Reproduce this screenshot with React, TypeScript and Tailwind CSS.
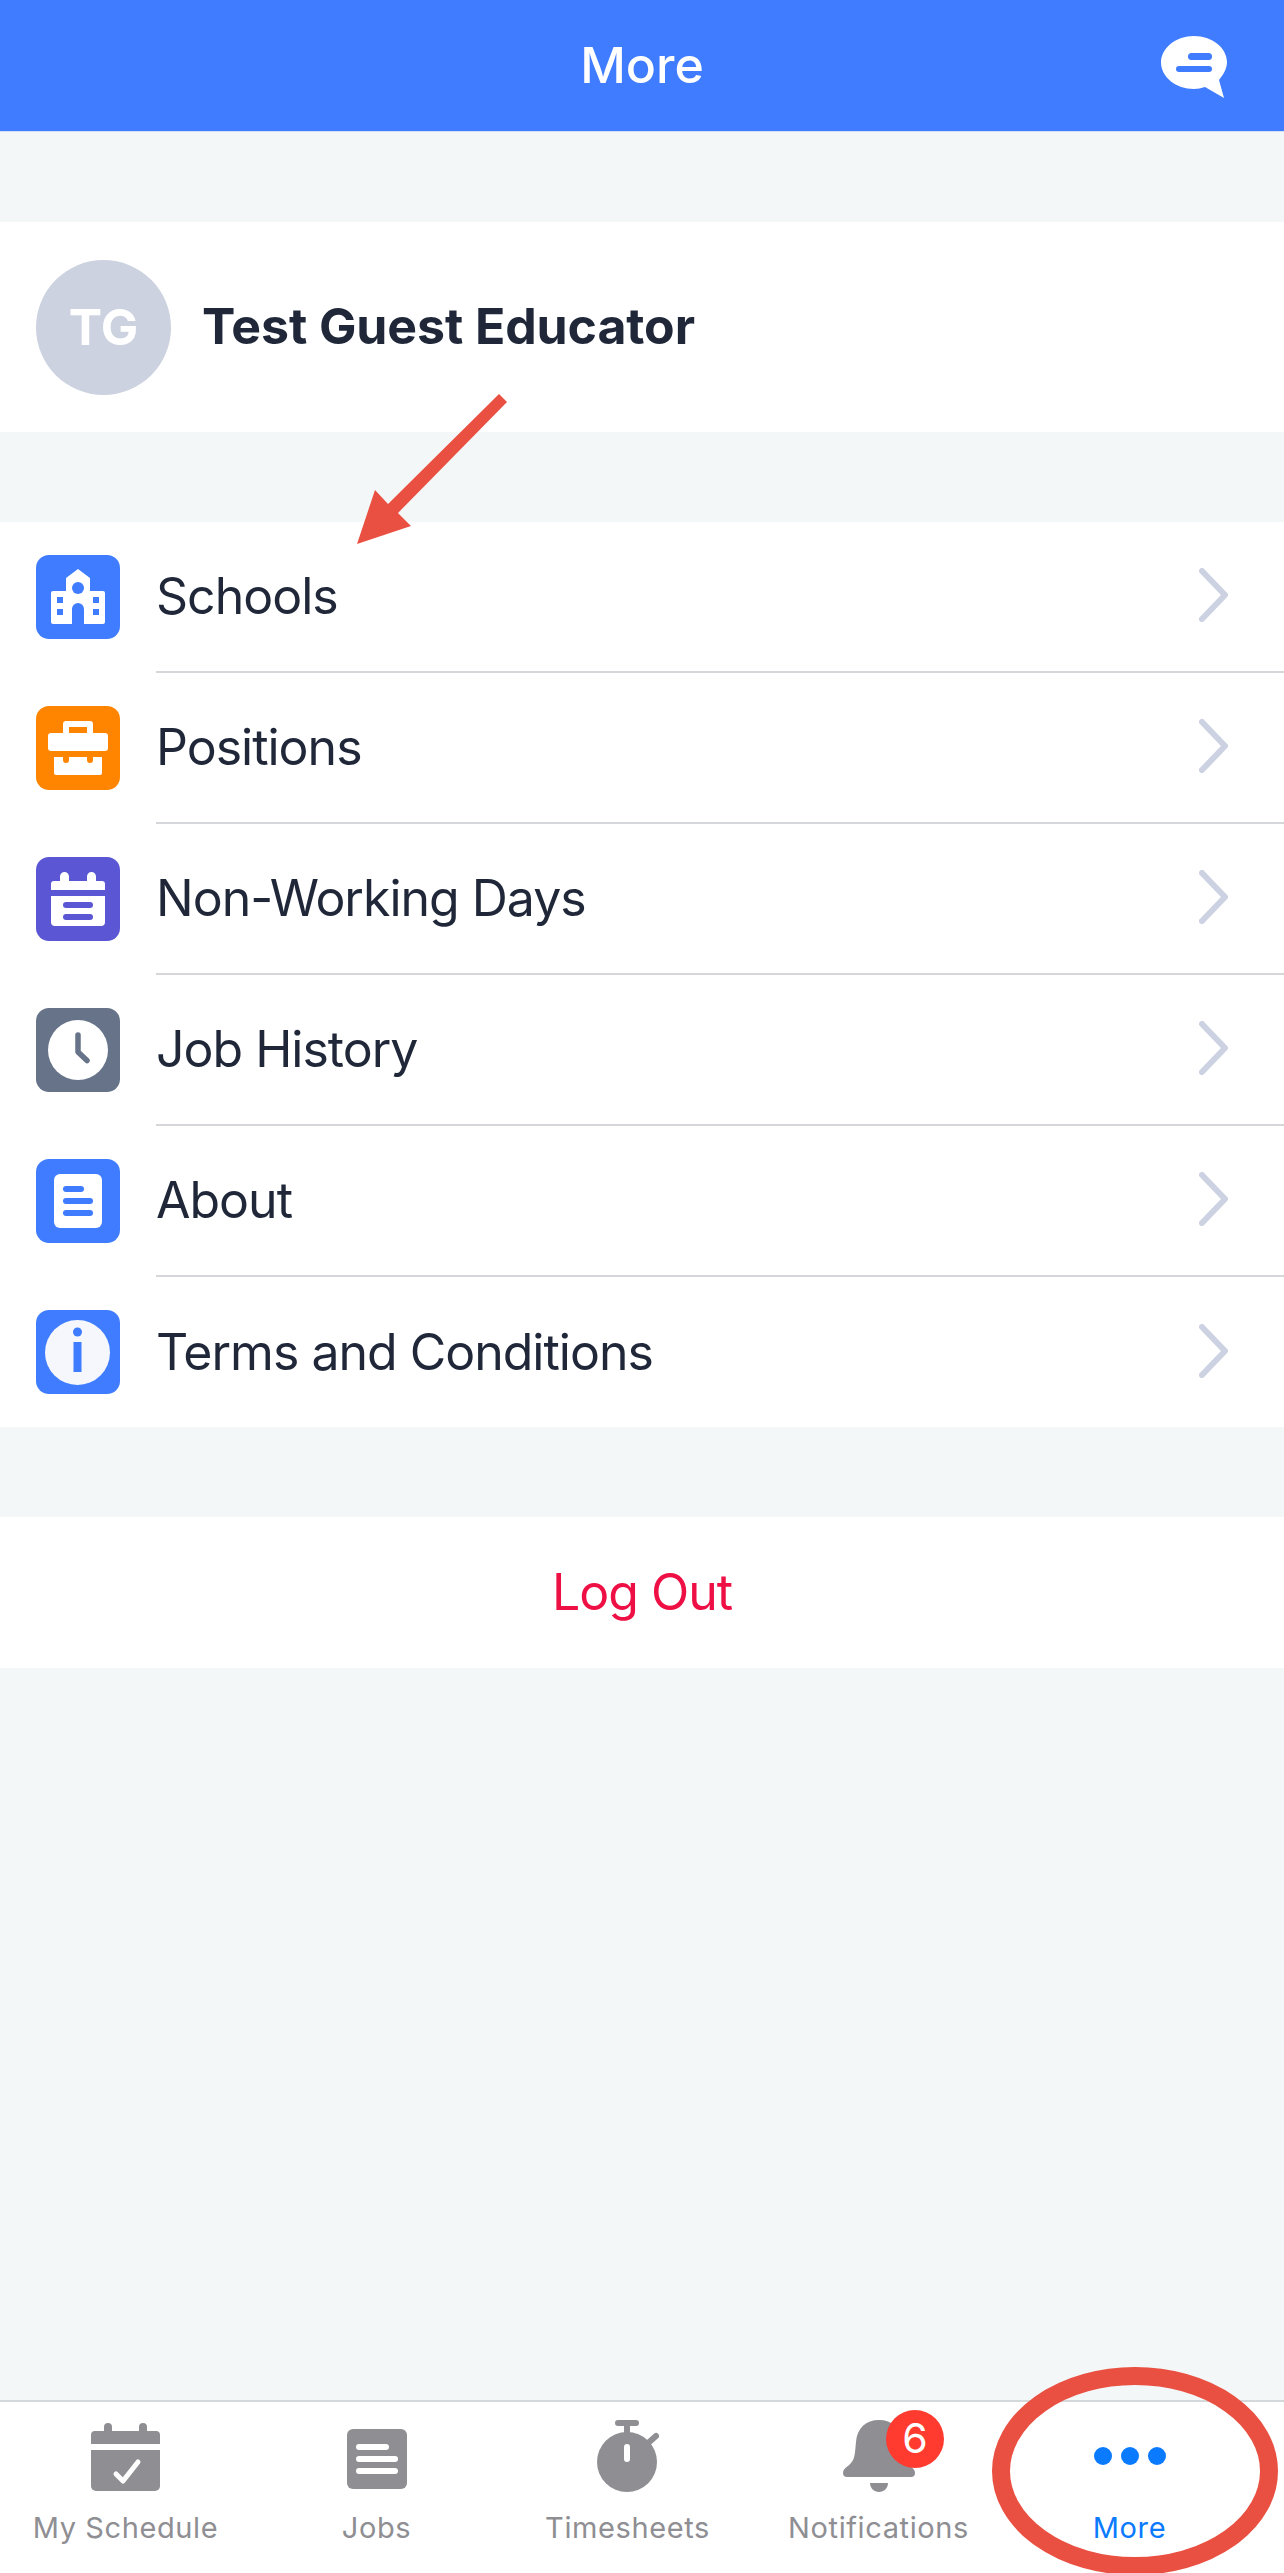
import React from 'react';

const SchoolIcon = () => (
  <svg viewBox="0 0 84 84" className="w-[84px] h-[84px] shrink-0">
    <rect width="84" height="84" rx="13" fill="#3f7cff" />
    <path d="M15 38a2 2 0 0 1 2-2h13V23l12-9 12 9v13h13a2 2 0 0 1 2 2v29a2 2 0 0 1-2 2H48V54a6 6 0 0 0-12 0v15H17a2 2 0 0 1-2-2z" fill="#fff" />
    <circle cx="42" cy="33" r="6" fill="#3f7cff" />
    <path d="M21 42h6v6h-6zM21 54h6v6h-6zM57 42h6v6h-6zM57 54h6v6h-6z" fill="#3f7cff" />
  </svg>
);

const BriefcaseIcon = () => (
  <svg viewBox="0 0 84 84" className="w-[84px] h-[84px] shrink-0">
    <rect width="84" height="84" rx="13" fill="#ff8500" />
    <path d="M27 27v-9a3 3 0 0 1 3-3h24a3 3 0 0 1 3 3v9h-6v-6H33v6z" fill="#fff" />
    <rect x="12" y="27" width="60" height="18" rx="3" fill="#fff" />
    <path d="M18 51h9v3a3 3 0 0 0 6 0v-3h18v3a3 3 0 0 0 6 0v-3h9v16a2 2 0 0 1-2 2H20a2 2 0 0 1-2-2z" fill="#fff" />
  </svg>
);

const CalendarIcon = () => (
  <svg viewBox="0 0 84 84" className="w-[84px] h-[84px] shrink-0">
    <rect width="84" height="84" rx="13" fill="#5a56d4" />
    <path d="M15 33v-6a3 3 0 0 1 3-3h6v-4.500a4.500 4.500 0 0 1 9 0V24h18v-4.500a4.500 4.500 0 0 1 9 0V24h6a3 3 0 0 1 3 3v6z" fill="#fff" />
    <path d="M15 39h54v26a4 4 0 0 1-4 4H19a4 4 0 0 1-4-4z" fill="#fff" />
    <rect x="27" y="45" width="30" height="6" rx="3" fill="#5a56d4" />
    <rect x="27" y="57" width="30" height="6" rx="3" fill="#5a56d4" />
  </svg>
);

const ClockIcon = () => (
  <svg viewBox="0 0 84 84" className="w-[84px] h-[84px] shrink-0">
    <rect width="84" height="84" rx="13" fill="#667389" />
    <circle cx="42" cy="42" r="30" fill="#fff" />
    <path d="M42 27v17l9 8.500" fill="none" stroke="#667389" strokeWidth="5.500" strokeLinecap="round" strokeLinejoin="round" />
  </svg>
);

const DocIcon = () => (
  <svg viewBox="0 0 84 84" className="w-[84px] h-[84px] shrink-0">
    <rect width="84" height="84" rx="13" fill="#3f7cff" />
    <rect x="18" y="15" width="48" height="54" rx="6" fill="#fff" />
    <rect x="27" y="27" width="21" height="6" rx="3" fill="#3f7cff" />
    <rect x="27" y="39" width="30" height="6" rx="3" fill="#3f7cff" />
    <rect x="27" y="51" width="30" height="6" rx="3" fill="#3f7cff" />
  </svg>
);

const InfoIcon = () => (
  <svg viewBox="0 0 84 84" className="w-[84px] h-[84px] shrink-0">
    <rect width="84" height="84" rx="13" fill="#3f7cff" />
    <circle cx="41.500" cy="42.500" r="32.500" fill="#f5f7fd" />
    <circle cx="41.500" cy="22" r="4.500" fill="#3f7cff" />
    <rect x="37.500" y="32" width="8" height="30" fill="#3f7cff" />
  </svg>
);

const Chevron = () => (
  <svg viewBox="0 0 29 54" className="w-[29px] h-[54px] mb-[3px]">
    <path d="M3 3l23 24L3 51" fill="none" stroke="#ccd2e2" strokeWidth="6" strokeLinecap="round" strokeLinejoin="round" />
  </svg>
);

const menuItems = [
  { label: 'Schools', icon: <SchoolIcon /> },
  { label: 'Positions', icon: <BriefcaseIcon /> },
  { label: 'Non-Working Days', icon: <CalendarIcon /> },
  { label: 'Job History', icon: <ClockIcon /> },
  { label: 'About', icon: <DocIcon /> },
  { label: 'Terms and Conditions', icon: <InfoIcon /> },
];

const TabCalendar = () => (
  <svg viewBox="0 0 69 69" className="w-[69px] h-[69px]">
    <path d="M0 21v-9a4 4 0 0 1 4-4h9V4a4 4 0 0 1 8 0v4h27V4a4 4 0 0 1 8 0v4h9a4 4 0 0 1 4 4v9z" fill="#8e8e93" />
    <path d="M0 27h69v36a5 5 0 0 1-5 5H5a5 5 0 0 1-5-5z" fill="#8e8e93" />
    <path d="M25 51l7 7 15-19" fill="none" stroke="#fff" strokeWidth="5" strokeLinecap="round" strokeLinejoin="round" />
  </svg>
);

const TabJobs = () => (
  <svg viewBox="0 0 60 60" className="w-[60px] h-[60px] mb-[3px]">
    <rect width="60" height="60" rx="6" fill="#8e8e93" />
    <rect x="9" y="15" width="33" height="6" rx="3" fill="#fff" />
    <rect x="9" y="27" width="42" height="6" rx="3" fill="#fff" />
    <rect x="9" y="39" width="42" height="6" rx="3" fill="#fff" />
  </svg>
);

const TabTimer = () => (
  <svg viewBox="0 0 62 72" className="w-[62px] h-[72px]">
    <rect x="18" y="0" width="24" height="6" rx="3" fill="#8e8e93" />
    <rect x="27" y="5" width="6" height="10" fill="#8e8e93" />
    <path d="M50 24l9-8" stroke="#8e8e93" strokeWidth="6" strokeLinecap="round" />
    <circle cx="30" cy="42" r="30" fill="#8e8e93" />
    <rect x="27" y="24" width="6" height="18" rx="3" fill="#fff" />
  </svg>
);

const TabBell = () => (
  <svg viewBox="0 0 72 72" className="w-[72px] h-[72px]">
    <path d="M36 0c13 0 22 8 23 22 1 10 1 17 5 21 2 3 8 5 8 10 0 3-2 4-4 4H4c-2 0-4-1-4-4 0-5 6-7 8-10 4-4 4-11 5-21C14 8 23 0 36 0z" fill="#8e8e93" />
    <path d="M27 63h18c0 5-4 9-9 9s-9-4-9-9z" fill="#8e8e93" />
  </svg>
);

const tabs = [
  { label: 'My Schedule', icon: <TabCalendar /> },
  { label: 'Jobs', icon: <TabJobs /> },
  { label: 'Timesheets', icon: <TabTimer /> },
  { label: 'Notifications', icon: <TabBell /> },
];

export default function App() {
  return (
    <div className="relative w-[1284px] h-[2573px] overflow-hidden flex flex-col bg-[#f4f7f8] font-['Inter',_'Liberation_Sans',_sans-serif] text-[#1f2739]">
      <header className="relative h-[132px] shrink-0 flex items-center justify-center bg-[#3f7cff] border-b border-[#d4e0f5]">
        <span className="text-[50px] font-medium text-white">More</span>
        <svg viewBox="0 0 66 62" className="absolute right-[57px] top-[36px] w-[66px] h-[62px]">
          <path d="M33 0c18 0 33 12 33 26 0 7-4 13-8 18l5 18-19-11c-4 1-7 2-11 2C15 53 0 41 0 26.500S15 0 33 0z" fill="#fff" />
          <rect x="27" y="17" width="24" height="7" rx="3.500" fill="#3f7cff" />
          <rect x="15" y="30" width="36" height="6" rx="3" fill="#3f7cff" />
        </svg>
      </header>

      <section className="mt-[90px] h-[210px] shrink-0 flex items-center bg-white pl-[36px]">
        <div className="w-[135px] h-[135px] rounded-full bg-[#ccd2df] flex items-center justify-center">
          <span className="text-[50px] font-bold text-white">TG</span>
        </div>
        <span className="ml-[31px] mb-[2px] text-[50px] font-bold tracking-[-0.1px]">Test Guest Educator</span>
      </section>

      <section className="mt-[90px] shrink-0 bg-white">
        {menuItems.map((item, i) => {
          const isLast = i === menuItems.length - 1;
          return (
            <div key={item.label} className={`flex items-center pl-[36px] ${isLast ? 'h-[150px]' : 'h-[151px]'}`}>
              <div className="mb-[1px]">{item.icon}</div>
              <div className={`ml-[36px] flex-1 h-full flex items-center pr-[56px] ${isLast ? '' : 'border-b-2 border-[#d5d6da]'}`}>
                <span className="flex-1 text-[50px] tracking-[-1px]">{item.label}</span>
                <Chevron />
              </div>
            </div>
          );
        })}
      </section>

      <section className="mt-[90px] h-[151px] shrink-0 flex items-center justify-center bg-white">
        <span className="text-[50px] tracking-[-1px] text-[#ee0f45]">Log Out</span>
      </section>

      <div className="flex-1" />

      <nav className="h-[173px] shrink-0 flex bg-white border-t-2 border-[#d5d8da] pr-[29px]">
        {tabs.map((tab) => (
          <div key={tab.label} className="relative w-[251px] h-full flex flex-col items-center">
            <div className="h-[90px] flex items-end justify-center">{tab.icon}</div>
            <span className="mt-[14px] text-[29px] tracking-[0.6px] text-[#8e8e93] whitespace-nowrap">{tab.label}</span>
            {tab.label === 'Notifications' && (
              <div className="absolute top-[8px] left-[133px] w-[58px] h-[58px] rounded-full bg-[#ff3b30] flex items-center justify-center text-[41px] text-white">
                6
              </div>
            )}
          </div>
        ))}
        <div className="w-[251px] h-full flex flex-col items-center">
          <div className="h-[90px] pb-[27px] flex items-end justify-center gap-[9px]">
            <span className="w-[18px] h-[18px] rounded-full bg-[#0a7aff]" />
            <span className="w-[18px] h-[18px] rounded-full bg-[#0a7aff]" />
            <span className="w-[18px] h-[18px] rounded-full bg-[#0a7aff]" />
          </div>
          <span className="mt-[14px] text-[29px] tracking-[0.6px] text-[#0a7aff]">More</span>
        </div>
      </nav>

      {/* red annotations drawn over the screenshot */}
      <svg viewBox="0 0 1284 2573" className="absolute inset-0 w-[1284px] h-[2573px] pointer-events-none">
        <path d="M499 394l8 8-109 111 13 13-54 18 18-54 13 14z" fill="#ea5041" />
        <ellipse cx="1135" cy="2471" rx="134" ry="95" fill="none" stroke="#ea5041" strokeWidth="18" />
      </svg>
    </div>
  );
}
